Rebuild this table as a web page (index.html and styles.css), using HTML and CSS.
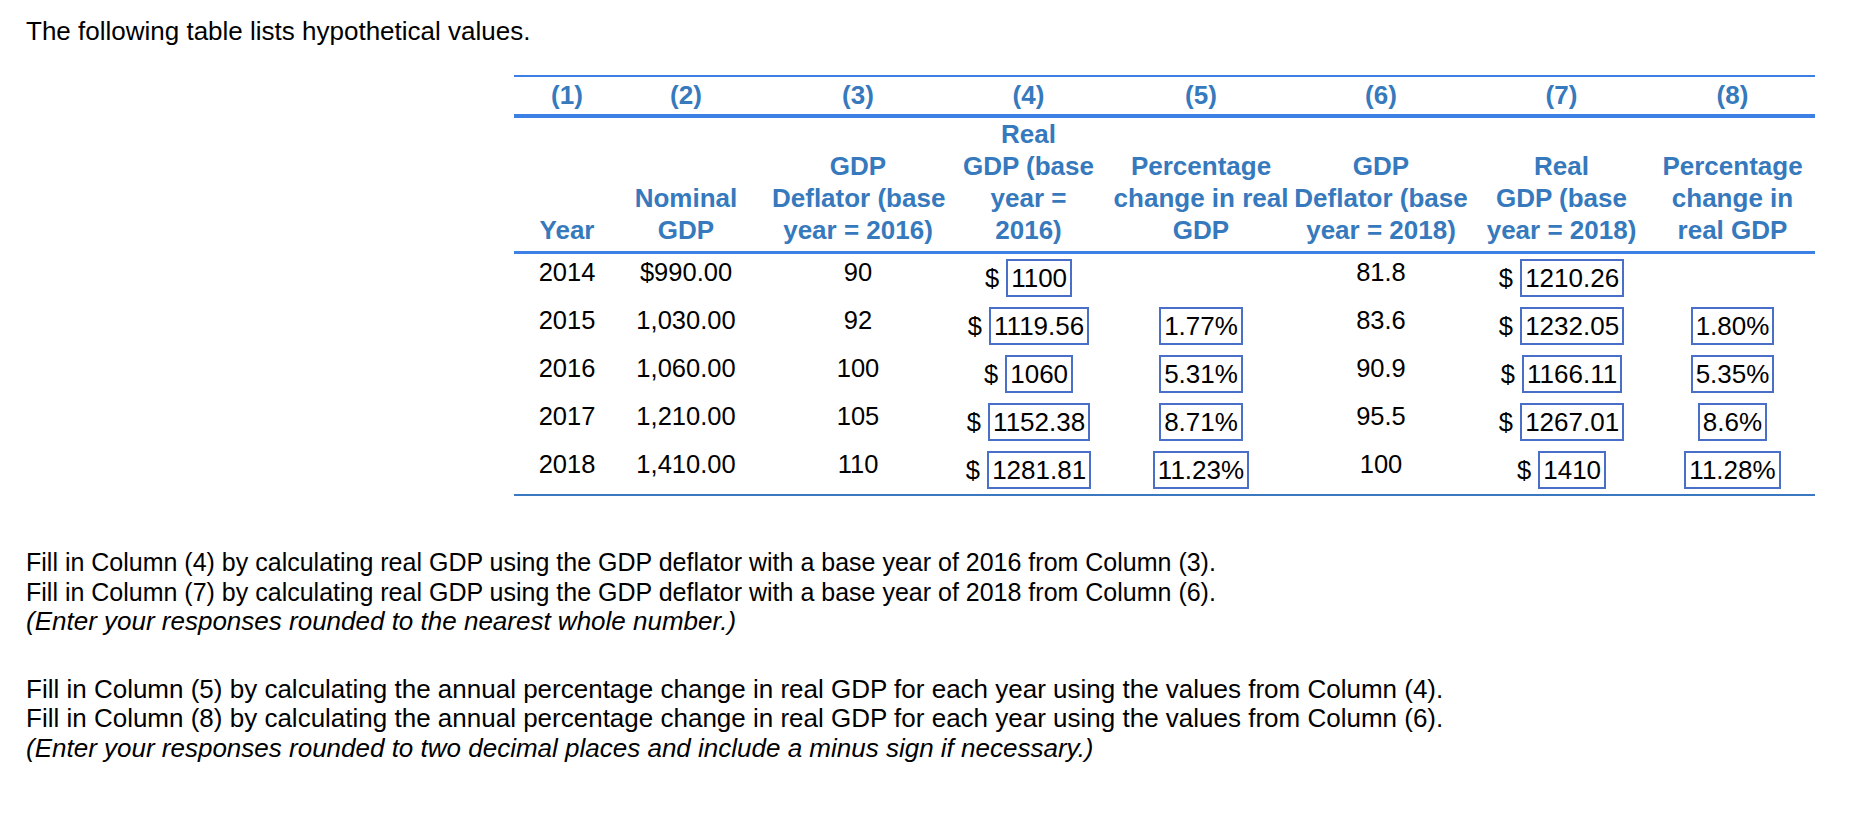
FILE: index.html
```html
<!DOCTYPE html>
<html lang="en">
<head>
<meta charset="utf-8">
<title>Hypothetical GDP values</title>
<link rel="stylesheet" href="styles.css">
</head>
<body>
<p class="intro">The following table lists hypothetical values.</p>

<table class="tbl">
  <colgroup>
    <col class="c1"><col class="c2"><col class="c3"><col class="c4">
    <col class="c5"><col class="c6"><col class="c7"><col class="c8">
  </colgroup>
  <thead>
    <tr class="num-row">
      <th>(1)</th><th>(2)</th><th>(3)</th><th>(4)</th><th>(5)</th><th>(6)</th><th>(7)</th><th>(8)</th>
    </tr>
    <tr class="label-row">
      <th>Year</th>
      <th>Nominal<br>GDP</th>
      <th>GDP<br>Deflator (base<br>year = 2016)</th>
      <th>Real<br>GDP (base<br>year =<br>2016)</th>
      <th>Percentage<br>change in real<br>GDP</th>
      <th>GDP<br>Deflator (base<br>year = 2018)</th>
      <th>Real<br>GDP (base<br>year = 2018)</th>
      <th>Percentage<br>change in<br>real GDP</th>
    </tr>
  </thead>
  <tbody>
    <tr>
      <td>2014</td><td>$990.00</td><td>90</td>
      <td>$ <span class="ans">1100</span></td>
      <td></td>
      <td>81.8</td>
      <td>$ <span class="ans">1210.26</span></td>
      <td></td>
    </tr>
    <tr>
      <td>2015</td><td>1,030.00</td><td>92</td>
      <td>$ <span class="ans">1119.56</span></td>
      <td><span class="ans">1.77%</span></td>
      <td>83.6</td>
      <td>$ <span class="ans">1232.05</span></td>
      <td><span class="ans">1.80%</span></td>
    </tr>
    <tr>
      <td>2016</td><td>1,060.00</td><td>100</td>
      <td>$ <span class="ans">1060</span></td>
      <td><span class="ans">5.31%</span></td>
      <td>90.9</td>
      <td>$ <span class="ans">1166.11</span></td>
      <td><span class="ans">5.35%</span></td>
    </tr>
    <tr>
      <td>2017</td><td>1,210.00</td><td>105</td>
      <td>$ <span class="ans">1152.38</span></td>
      <td><span class="ans">8.71%</span></td>
      <td>95.5</td>
      <td>$ <span class="ans">1267.01</span></td>
      <td><span class="ans">8.6%</span></td>
    </tr>
    <tr class="last-row">
      <td>2018</td><td>1,410.00</td><td>110</td>
      <td>$ <span class="ans">1281.81</span></td>
      <td><span class="ans">11.23%</span></td>
      <td>100</td>
      <td>$ <span class="ans">1410</span></td>
      <td><span class="ans">11.28%</span></td>
    </tr>
  </tbody>
</table>

<div class="instructions">
  <p class="inst inst-first"><span class="tight">Fill in Column (4) by calculating real GDP using the GDP deflator with a base year of 2016 from Column (3).<br>
  Fill in Column (7) by calculating real GDP using the GDP deflator with a base year of 2018 from Column (6).</span><br>
  <em>(Enter your responses rounded to the nearest whole number.)</em></p>
  <p class="inst">Fill in Column (5) by calculating the annual percentage change in real GDP for each year using the values from Column (4).<br>
  Fill in Column (8) by calculating the annual percentage change in real GDP for each year using the values from Column (6).<br>
  <em>(Enter your responses rounded to two decimal places and include a minus sign if necessary.)</em></p>
</div>
</body>
</html>
```

FILE: styles.css
```css
html, body {
  background: #ffffff;
}

body {
  margin: 0;
  padding: 16px 26px 0;
  font-family: "Liberation Sans", Arial, Helvetica, sans-serif;
  color: #000000;
}

.intro {
  margin: 0;
  font-size: 26px;
  line-height: 30px;
}

.tbl {
  margin: 29px 0 0 488px;
  width: 1301px;
  table-layout: fixed;
  border-collapse: separate;
  border-spacing: 0;
}

.c1 { width: 112px; }
.c2 { width: 146px; }
.c3 { width: 172px; }
.c4 { width: 169px; }
.c5 { width: 176px; }
.c6 { width: 184px; }
.c7 { width: 177px; }
.c8 { width: 165px; }

.tbl th {
  padding: 0;
  color: #3679bd;
  font-weight: bold;
  font-size: 26px;
  text-align: center;
  white-space: nowrap;
}

.num-row th {
  line-height: 37px;
  vertical-align: middle;
  border-top: 2px solid #3c80e6;
  border-bottom: 4px solid #3c80e6;
}

.label-row th {
  line-height: 32px;
  padding: 0 0 5px;
  vertical-align: bottom;
  border-bottom: 3px solid #3c80e6;
}

.tbl td {
  padding: 3px 0 5px;
  font-size: 25.5px;
  line-height: 30px;
  text-align: center;
  vertical-align: top;
  white-space: nowrap;
}

/* first two columns sit slightly left of their cell centre */
.tbl tr > :nth-child(1) {
  padding-right: 6px;
}

.tbl tr > :nth-child(2) {
  padding-right: 26px;
}

.last-row td {
  border-bottom: 2px solid #3a78c2;
}

.ans {
  display: inline-block;
  margin-top: 2px;
  padding: 2px 3px;
  border: 2px solid #4a6fc8;
  font-size: 26px;
  line-height: 30px;
}

.instructions {
  margin-top: 52px;
}

.inst {
  margin: 0;
  font-size: 26px;
  line-height: 29.5px;
}

.inst .tight {
  font-size: 25px;
}

.inst + .inst {
  margin-top: 38px;
}
```
